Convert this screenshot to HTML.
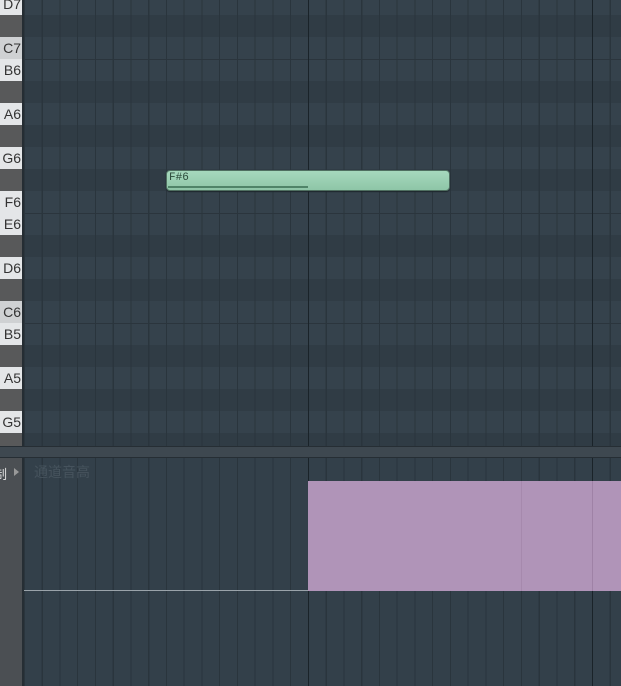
<!DOCTYPE html>
<html><head><meta charset="utf-8"><style>
body{margin:0;width:621px;height:686px;overflow:hidden;background:#33404a;position:relative;font-family:"Liberation Sans","Noto Sans CJK SC",sans-serif}
div{position:absolute;box-sizing:border-box}
.grid{left:24px;top:0;width:597px;height:446px;background:#35424c}
.dr{left:24px;width:597px;height:22px;background:#303c45}
.cols{left:24px;width:597px;background:repeating-linear-gradient(to right,#2a353d 0 1px,transparent 1px 17.75px)}
.bar{width:1px;background:#1a2329}
.k{left:0;width:22px;height:22px;background:#e4e6e8;color:#333;font-size:14px;text-align:right;padding-right:1px;line-height:23px}
.b{left:0;width:22px;height:22px;background:#58595a}
.hl{left:24px;width:597px;height:1px;background:#2b353d}
</style></head><body>
<div class="grid"></div>
<div class="dr" style="top:15px"></div>
<div class="dr" style="top:81px"></div>
<div class="dr" style="top:125px"></div>
<div class="dr" style="top:169px"></div>
<div class="dr" style="top:235px"></div>
<div class="dr" style="top:279px"></div>
<div class="dr" style="top:345px"></div>
<div class="dr" style="top:389px"></div>
<div class="dr" style="top:433px;height:13px"></div>
<div class="hl" style="top:59px"></div>
<div class="hl" style="top:213px"></div>
<div class="hl" style="top:323px"></div>
<div class="cols" style="top:0;height:446px"></div>
<div class="bar" style="left:308px;top:0;height:446px"></div>
<div class="bar" style="left:592px;top:0;height:446px"></div>
<div style="left:0;top:0;width:24px;height:446px;background:#58595a"></div>
<div style="left:22px;top:0;width:2px;height:446px;background:#252d33"></div>
<div class="k" style="top:-7px">D7</div>
<div class="k" style="top:37px;background:#cfd1d3">C7</div>
<div class="k" style="top:59px">B6</div>
<div class="k" style="top:103px">A6</div>
<div class="k" style="top:147px">G6</div>
<div class="k" style="top:191px">F6</div>
<div class="k" style="top:213px">E6</div>
<div class="k" style="top:257px">D6</div>
<div class="k" style="top:301px;background:#cfd1d3">C6</div>
<div class="k" style="top:323px">B5</div>
<div class="k" style="top:367px">A5</div>
<div class="k" style="top:411px">G5</div>
<div style="left:166px;top:170px;width:284px;height:21px;border-radius:4px;background:linear-gradient(#a6d9bd,#8ec6a7);border:1px solid #4f6f60;box-shadow:0 1px 1px #1d262c"></div>
<div style="left:169px;top:172px;font-size:11px;color:#2c4a3a;font-family:'Liberation Mono',monospace">F#6</div>
<div style="left:168px;top:186px;width:140px;height:2px;background:#4f8468"></div>
<div style="left:0;top:446px;width:621px;height:12px;background:#3e4850;border-top:1px solid #262e34;border-bottom:1px solid #262e34"></div>
<div style="left:0;top:458px;width:24px;height:228px;background:#4b4f53"></div>
<div style="left:22px;top:458px;width:2px;height:228px;background:#262e34"></div>
<div style="left:-6px;top:464px;font-size:13px;color:#ddd">制</div>
<div style="left:14px;top:468px;width:0;height:0;border-left:5px solid #999;border-top:4px solid transparent;border-bottom:4px solid transparent"></div>
<div class="cols" style="top:458px;height:228px"></div>
<div class="bar" style="left:308px;top:458px;height:228px"></div>
<div class="bar" style="left:592px;top:458px;height:228px"></div>
<div style="left:34px;top:462px;font-size:14px;color:#46535d">通道音高</div>
<div style="left:308px;top:481px;width:313px;height:110px;background:#b094b8"></div>
<div style="left:521px;top:481px;width:1px;height:110px;background:#a689ad"></div>
<div style="left:592px;top:481px;width:1px;height:110px;background:#9f82a6"></div>
<div style="left:24px;top:590px;width:284px;height:1px;background:#9aa3aa"></div>
</body></html>
